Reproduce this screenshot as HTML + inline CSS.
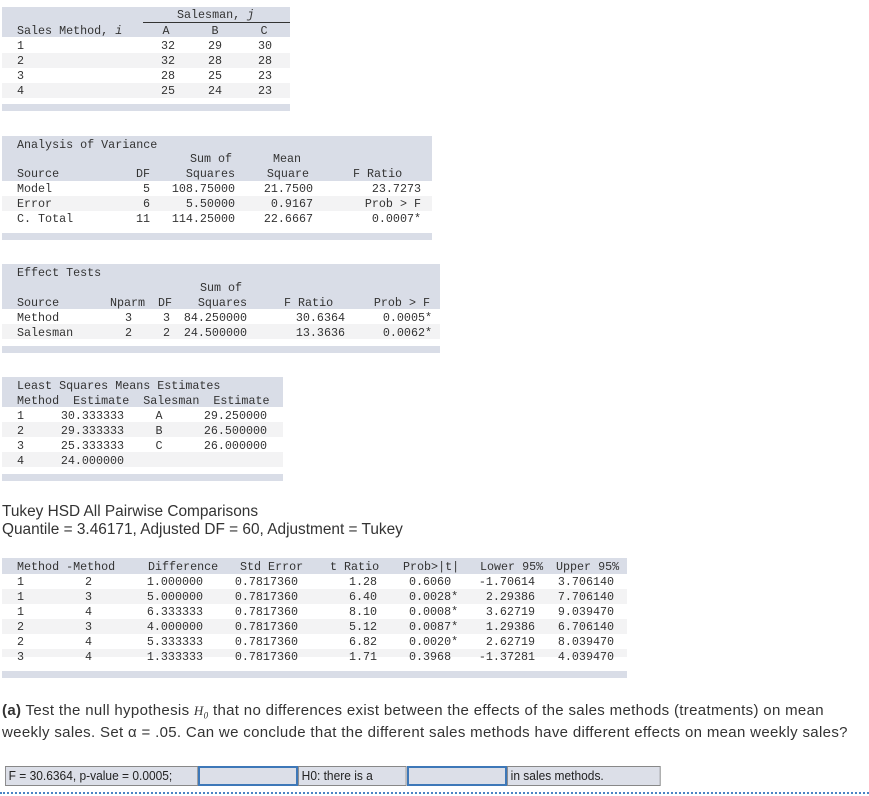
<!DOCTYPE html>
<html><head><meta charset="utf-8"><style>
body{margin:0;width:869px;height:796px;background:#fff;position:relative;overflow:hidden;font-family:"Liberation Mono",monospace;font-size:11.7px;color:#333}
.b{position:absolute;background:#d9dde7}
.g{position:absolute;background:#f3f3f4}
.t{position:absolute;white-space:pre;line-height:14px;margin-top:-6px}
.r{position:absolute;white-space:pre;line-height:14px;margin-top:-6px;transform:translateX(-100%)}
.c{position:absolute;white-space:pre;line-height:14px;margin-top:-6px;transform:translateX(-50%)}
.s{position:absolute;white-space:pre;font-family:"Liberation Sans",sans-serif;color:#333}
.cell{position:absolute;top:766px;height:20px;background:#dcdfe8;border:1px solid #888;box-sizing:border-box;font-family:"Liberation Sans",sans-serif;font-size:13px;line-height:18px;padding-left:3px;color:#222;transform:scaleX(.92);transform-origin:left}
.in{border:2px solid #3e78b8}
</style></head><body>
<!-- Table 1 -->
<div class="b" style="left:2px;top:7px;width:288px;height:30px"></div>
<div class="g" style="left:2px;top:53px;width:288px;height:15px"></div>
<div class="g" style="left:2px;top:83px;width:288px;height:15px"></div>
<div class="b" style="left:2px;top:104px;width:288px;height:7px"></div>
<div style="position:absolute;left:143px;top:22px;width:147px;height:1px;background:#333"></div>
<div class="t" style="left:177px;top:14px">Salesman, <i>j</i></div>
<div class="t" style="left:17px;top:30px">Sales Method, <i>i</i></div>
<div class="c" style="left:166px;top:30px">A</div><div class="c" style="left:215px;top:30px">B</div><div class="c" style="left:264px;top:30px">C</div>
<div class="t" style="left:17px;top:45px">1</div><div class="t" style="left:17px;top:60px">2</div><div class="t" style="left:17px;top:75px">3</div><div class="t" style="left:17px;top:90px">4</div>
<div class="r" style="left:175px;top:45px">32</div><div class="r" style="left:222px;top:45px">29</div><div class="r" style="left:272px;top:45px">30</div>
<div class="r" style="left:175px;top:60px">32</div><div class="r" style="left:222px;top:60px">28</div><div class="r" style="left:272px;top:60px">28</div>
<div class="r" style="left:175px;top:75px">28</div><div class="r" style="left:222px;top:75px">25</div><div class="r" style="left:272px;top:75px">23</div>
<div class="r" style="left:175px;top:90px">25</div><div class="r" style="left:222px;top:90px">24</div><div class="r" style="left:272px;top:90px">23</div>

<!-- ANOVA -->
<div class="b" style="left:2px;top:136px;width:430px;height:45px"></div>
<div class="g" style="left:2px;top:196px;width:430px;height:15px"></div>
<div class="b" style="left:2px;top:233px;width:430px;height:7px"></div>
<div class="t" style="left:17px;top:144px">Analysis of Variance</div>
<div class="c" style="left:211px;top:158px">Sum of</div><div class="c" style="left:287px;top:158px">Mean</div>
<div class="t" style="left:17px;top:173px">Source</div><div class="r" style="left:150px;top:173px">DF</div><div class="r" style="left:235px;top:173px">Squares</div><div class="r" style="left:309px;top:173px">Square</div><div class="t" style="left:353px;top:173px">F Ratio</div>
<div class="t" style="left:17px;top:188px">Model</div><div class="r" style="left:150px;top:188px">5</div><div class="r" style="left:235px;top:188px">108.75000</div><div class="r" style="left:313px;top:188px">21.7500</div><div class="r" style="left:421px;top:188px">23.7273</div>
<div class="t" style="left:17px;top:203px">Error</div><div class="r" style="left:150px;top:203px">6</div><div class="r" style="left:235px;top:203px">5.50000</div><div class="r" style="left:313px;top:203px">0.9167</div><div class="r" style="left:421px;top:203px">Prob &gt; F</div>
<div class="t" style="left:17px;top:218px">C. Total</div><div class="r" style="left:150px;top:218px">11</div><div class="r" style="left:235px;top:218px">114.25000</div><div class="r" style="left:313px;top:218px">22.6667</div><div class="r" style="left:421px;top:218px">0.0007*</div>

<!-- Effect tests -->
<div class="b" style="left:2px;top:264px;width:438px;height:45px"></div>
<div class="g" style="left:2px;top:324px;width:438px;height:15px"></div>
<div class="b" style="left:2px;top:346px;width:438px;height:7px"></div>
<div class="t" style="left:17px;top:272px">Effect Tests</div>
<div class="c" style="left:221px;top:287px">Sum of</div>
<div class="t" style="left:17px;top:302px">Source</div><div class="t" style="left:110px;top:302px">Nparm</div><div class="t" style="left:158px;top:302px">DF</div><div class="r" style="left:247px;top:302px">Squares</div><div class="t" style="left:284px;top:302px">F Ratio</div><div class="r" style="left:430px;top:302px">Prob &gt; F</div>
<div class="t" style="left:17px;top:317px">Method</div><div class="r" style="left:132px;top:317px">3</div><div class="r" style="left:170px;top:317px">3</div><div class="r" style="left:247px;top:317px">84.250000</div><div class="r" style="left:345px;top:317px">30.6364</div><div class="r" style="left:432px;top:317px">0.0005*</div>
<div class="t" style="left:17px;top:332px">Salesman</div><div class="r" style="left:132px;top:332px">2</div><div class="r" style="left:170px;top:332px">2</div><div class="r" style="left:247px;top:332px">24.500000</div><div class="r" style="left:345px;top:332px">13.3636</div><div class="r" style="left:432px;top:332px">0.0062*</div>

<!-- LSM -->
<div class="b" style="left:2px;top:377px;width:281px;height:30px"></div>
<div class="g" style="left:2px;top:422px;width:281px;height:15px"></div>
<div class="g" style="left:2px;top:452px;width:281px;height:15px"></div>
<div class="b" style="left:2px;top:474px;width:281px;height:7px"></div>
<div class="t" style="left:17px;top:385px">Least Squares Means Estimates</div>
<div class="t" style="left:17px;top:400px">Method  Estimate  Salesman  Estimate</div>
<div class="t" style="left:17px;top:415px">1</div><div class="r" style="left:124px;top:415px">30.333333</div><div class="c" style="left:159px;top:415px">A</div><div class="r" style="left:267px;top:415px">29.250000</div>
<div class="t" style="left:17px;top:430px">2</div><div class="r" style="left:124px;top:430px">29.333333</div><div class="c" style="left:159px;top:430px">B</div><div class="r" style="left:267px;top:430px">26.500000</div>
<div class="t" style="left:17px;top:445px">3</div><div class="r" style="left:124px;top:445px">25.333333</div><div class="c" style="left:159px;top:445px">C</div><div class="r" style="left:267px;top:445px">26.000000</div>
<div class="t" style="left:17px;top:460px">4</div><div class="r" style="left:124px;top:460px">24.000000</div>

<div class="s" style="left:2px;top:503px;font-size:15.4px">Tukey HSD All Pairwise Comparisons</div>
<div class="s" style="left:2px;top:521px;font-size:15.4px">Quantile = 3.46171, Adjusted DF = 60, Adjustment = Tukey</div>

<!-- Tukey table -->
<div class="b" style="left:2px;top:558px;width:625px;height:16px"></div>
<div class="g" style="left:2px;top:589px;width:625px;height:15px"></div>
<div class="g" style="left:2px;top:619px;width:625px;height:15px"></div>
<div class="g" style="left:2px;top:649px;width:625px;height:8px"></div>
<div class="b" style="left:2px;top:671px;width:625px;height:7px"></div>
<div class="t" style="left:17px;top:566px">Method -Method</div><div class="t" style="left:148px;top:566px">Difference</div><div class="t" style="left:240px;top:566px">Std Error</div><div class="t" style="left:330px;top:566px">t Ratio</div><div class="t" style="left:403px;top:566px">Prob&gt;|t|</div><div class="t" style="left:480px;top:566px">Lower 95%</div><div class="t" style="left:556px;top:566px">Upper 95%</div>
<div class="t" style="left:17px;top:581px">1</div><div class="t" style="left:85px;top:581px">2</div><div class="r" style="left:203px;top:581px">1.000000</div><div class="r" style="left:298px;top:581px">0.7817360</div><div class="r" style="left:377px;top:581px">1.28</div><div class="t" style="left:409px;top:581px">0.6060</div><div class="r" style="left:535px;top:581px">-1.70614</div><div class="r" style="left:614px;top:581px">3.706140</div>
<div class="t" style="left:17px;top:596px">1</div><div class="t" style="left:85px;top:596px">3</div><div class="r" style="left:203px;top:596px">5.000000</div><div class="r" style="left:298px;top:596px">0.7817360</div><div class="r" style="left:377px;top:596px">6.40</div><div class="t" style="left:409px;top:596px">0.0028*</div><div class="r" style="left:535px;top:596px">2.29386</div><div class="r" style="left:614px;top:596px">7.706140</div>
<div class="t" style="left:17px;top:611px">1</div><div class="t" style="left:85px;top:611px">4</div><div class="r" style="left:203px;top:611px">6.333333</div><div class="r" style="left:298px;top:611px">0.7817360</div><div class="r" style="left:377px;top:611px">8.10</div><div class="t" style="left:409px;top:611px">0.0008*</div><div class="r" style="left:535px;top:611px">3.62719</div><div class="r" style="left:614px;top:611px">9.039470</div>
<div class="t" style="left:17px;top:626px">2</div><div class="t" style="left:85px;top:626px">3</div><div class="r" style="left:203px;top:626px">4.000000</div><div class="r" style="left:298px;top:626px">0.7817360</div><div class="r" style="left:377px;top:626px">5.12</div><div class="t" style="left:409px;top:626px">0.0087*</div><div class="r" style="left:535px;top:626px">1.29386</div><div class="r" style="left:614px;top:626px">6.706140</div>
<div class="t" style="left:17px;top:641px">2</div><div class="t" style="left:85px;top:641px">4</div><div class="r" style="left:203px;top:641px">5.333333</div><div class="r" style="left:298px;top:641px">0.7817360</div><div class="r" style="left:377px;top:641px">6.82</div><div class="t" style="left:409px;top:641px">0.0020*</div><div class="r" style="left:535px;top:641px">2.62719</div><div class="r" style="left:614px;top:641px">8.039470</div>
<div class="t" style="left:17px;top:656px">3</div><div class="t" style="left:85px;top:656px">4</div><div class="r" style="left:203px;top:656px">1.333333</div><div class="r" style="left:298px;top:656px">0.7817360</div><div class="r" style="left:377px;top:656px">1.71</div><div class="t" style="left:409px;top:656px">0.3968</div><div class="r" style="left:535px;top:656px">-1.37281</div><div class="r" style="left:614px;top:656px">4.039470</div>

<div class="s" style="left:2px;top:700px;font-size:15px;line-height:22px;letter-spacing:0.33px"><b>(a)</b> Test the null hypothesis <i style="font-family:'Liberation Serif',serif;font-size:13px">H<sub style="font-size:9px;line-height:0">0</sub></i> that no differences exist between the effects of the sales methods (treatments) on mean<br>weekly sales. Set α = .05. Can we conclude that the different sales methods have different effects on mean weekly sales?</div>

<div class="cell" style="left:5px;width:210px">F = 30.6364, p-value = 0.0005;</div>
<div class="cell in" style="left:198px;width:100px;transform:none"></div>
<div class="cell" style="left:298px;width:118px">H0: there is a</div>
<div class="cell in" style="left:407px;width:100px;transform:none"></div>
<div class="cell" style="left:507px;width:167px">in sales methods.</div>
<div style="position:absolute;left:0;top:792px;width:869px;border-top:2px dotted #4a84c4"></div>
</body></html>
